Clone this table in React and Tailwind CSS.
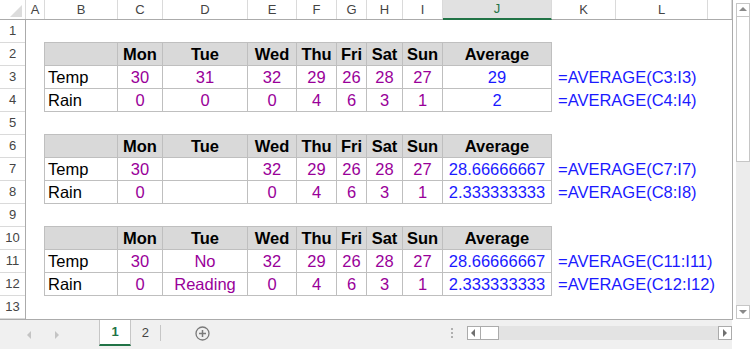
import React from "react";

const COLS = [
  { label: "A", w: "w-[19px]" },
  { label: "B", w: "w-[73px]" },
  { label: "C", w: "w-[45px]" },
  { label: "D", w: "w-[85px]" },
  { label: "E", w: "w-[49px]" },
  { label: "F", w: "w-[40px]" },
  { label: "G", w: "w-[30px]" },
  { label: "H", w: "w-[36px]" },
  { label: "I", w: "w-[40px]" },
  { label: "J", w: "w-[109px]", active: true },
  { label: "K", w: "w-[64px]" },
  { label: "L", w: "w-[92px]" },
  { label: "", w: "w-[24px]" },
];

const DAYS = ["Mon", "Tue", "Wed", "Thu", "Fri", "Sat", "Sun"];

const BLOCKS = [
  {
    row: "row-start-2",
    temp: ["30", "31", "32", "29", "26", "28", "27"],
    rain: ["0", "0", "0", "4", "6", "3", "1"],
    avg: ["29", "2"],
    formula: ["=AVERAGE(C3:I3)", "=AVERAGE(C4:I4)"],
  },
  {
    row: "row-start-6",
    temp: ["30", "", "32", "29", "26", "28", "27"],
    rain: ["0", "", "0", "4", "6", "3", "1"],
    avg: ["28.66666667", "2.333333333"],
    formula: ["=AVERAGE(C7:I7)", "=AVERAGE(C8:I8)"],
  },
  {
    row: "row-start-10",
    temp: ["30", "No", "32", "29", "26", "28", "27"],
    rain: ["0", "Reading", "0", "4", "6", "3", "1"],
    avg: ["28.66666667", "2.333333333"],
    formula: ["=AVERAGE(C11:I11)", "=AVERAGE(C12:I12)"],
  },
];

const cell = "border-r border-b border-[#bfbfbf] leading-[22px] whitespace-nowrap";

function Block({ b }) {
  const rows = [
    ["Temp", b.temp, b.avg[0], b.formula[0]],
    ["Rain", b.rain, b.avg[1], b.formula[1]],
  ];
  return (
    <div className={`${b.row} col-start-2 col-end-14 row-span-3 grid grid-cols-subgrid grid-rows-subgrid`}>
      {/* header row */}
      <div className={`${cell} -ml-px -mt-px border-l border-t bg-[#d9d9d9]`} />
      {DAYS.map((d) => (
        <div key={d} className={`${cell} -mt-px border-t bg-[#d9d9d9] text-center font-bold`}>
          {d}
        </div>
      ))}
      <div className={`${cell} -mt-px border-t bg-[#d9d9d9] text-center font-bold`}>Average</div>
      <div className="col-span-3" />

      {rows.map(([name, vals, avg, f]) => (
        <React.Fragment key={name}>
          <div className={`${cell} -ml-px border-l pl-[3px]`}>{name}</div>
          {vals.map((v, i) => (
            <div key={i} className={`${cell} text-center text-[#990099]`}>
              {v}
            </div>
          ))}
          <div className={`${cell} text-center text-[#1a1aff]`}>{avg}</div>
          <div className="col-span-3 pl-[6px] leading-[22px] whitespace-nowrap text-[#1a1aff]">{f}</div>
        </React.Fragment>
      ))}
    </div>
  );
}

function Arrow({ dir, cls }) {
  const pts = {
    up: "1,6 5,2 9,6",
    down: "1,3 5,7 9,3",
    left: "6,1 2,5 6,9",
    right: "3,1 7,5 3,9",
  }[dir];
  return (
    <svg width="10" height="10" viewBox="0 0 10 10" className={cls}>
      <polygon points={pts} fill="currentColor" />
    </svg>
  );
}

export default function App() {
  return (
    <div className="w-[754px] h-[349px] overflow-hidden bg-white font-['Liberation_Sans',Arial,sans-serif]">
      <div className="flex h-[320px]">
        {/* sheet */}
        <div className="w-[733px] border-r border-b border-[#ababab] flex flex-col">
          {/* column headers */}
          <div className="flex h-[20px] border-b border-[#ababab] text-[13px] text-[#444]">
            <div className="w-[26px] border-r border-[#dadada] relative">
              <svg width="12" height="12" viewBox="0 0 12 12" className="absolute right-[3px] bottom-[2px]">
                <polygon points="12,0 12,12 0,12" fill="#dcdcdc" />
              </svg>
            </div>
            {COLS.map((c, i) => (
              <div
                key={i}
                className={
                  c.active
                    ? `${c.w} shrink-0 border-r border-[#dadada] bg-[#e1e1e1] text-[#217346] border-b-2 border-b-[#217346] -mb-px text-center leading-[18px]`
                    : `${c.w} shrink-0 border-r border-[#dadada] text-center leading-[19px]`
                }
              >
                {c.label}
              </div>
            ))}
          </div>

          <div className="flex">
            {/* row headers */}
            <div className="w-[26px] shrink-0 flex flex-col border-r border-[#ababab] text-[13px] text-[#444]">
              {Array.from({ length: 13 }, (_, i) => (
                <div key={i} className="h-[23px] border-b border-[#dadada] text-center leading-[22px]">
                  {i + 1}
                </div>
              ))}
            </div>

            {/* cells */}
            <div className="grid grid-cols-[19px_73px_45px_85px_49px_40px_30px_36px_40px_109px_64px_92px_24px] grid-rows-[repeat(13,23px)] text-[16.5px] text-black">
              {BLOCKS.map((b, i) => (
                <Block key={i} b={b} />
              ))}
            </div>
          </div>
        </div>

        {/* vertical scrollbar */}
        <div className="flex-1 pl-[3px] pt-[3px] flex flex-col">
          <div className="w-[14px] h-[14px] border border-[#c6c6c6] flex items-center justify-center text-[#8a8a8a]">
            <Arrow dir="up" />
          </div>
          <div className="w-[14px] h-[145px] border border-[#c6c6c6] border-t-0 bg-white" />
          <div className="w-[14px] flex-1 bg-[#ececec]" />
          <div className="w-[14px] h-[14px] border border-[#c6c6c6] flex items-center justify-center text-[#8a8a8a] mb-[1px]">
            <Arrow dir="down" />
          </div>
        </div>
      </div>

      {/* sheet tabs bar */}
      <div className="flex h-[29px] bg-[#f0f0f0] text-[13px]">
        <div className="w-[100px] flex items-center gap-[17px] pl-[25px] text-[#c4c4c4]">
          <Arrow dir="left" />
          <Arrow dir="right" />
        </div>
        <div className="w-[32px] h-[26px] bg-white border-x border-[#c6c6c6] border-b-2 border-b-[#217346] flex items-center justify-center font-bold text-[#217346]">
          1
        </div>
        <div className="w-[29px] flex items-center justify-center text-[#444] pb-[3px]">2</div>
        <div className="w-px h-[16px] mt-[5px] bg-[#c6c6c6]" />
        <div className="w-[83px] flex items-center pl-[34px] pb-[3px]">
          <svg width="15" height="15" viewBox="0 0 15 15">
            <circle cx="7.5" cy="7.5" r="6.5" fill="none" stroke="#7a7a7a" strokeWidth="1.3" />
            <path d="M7.5 4v7M4 7.5h7" stroke="#7a7a7a" strokeWidth="1.5" />
          </svg>
        </div>
        <div className="flex-1 flex items-center pl-[208px] pb-[3px]">
          <div className="flex flex-col gap-[2px] mr-[14px]">
            <div className="w-[2px] h-[2px] bg-[#b0b0b0]" />
            <div className="w-[2px] h-[2px] bg-[#b0b0b0]" />
            <div className="w-[2px] h-[2px] bg-[#b0b0b0]" />
          </div>
          <div className="w-[14px] h-[14px] border border-[#ababab] bg-white flex items-center justify-center text-[#707070]">
            <Arrow dir="left" />
          </div>
          <div className="w-[18px] h-[14px] border border-l-0 border-[#ababab] bg-white" />
          <div className="w-[219px] h-[14px] bg-[#e3e3e3]" />
          <div className="w-[14px] h-[14px] border border-[#ababab] bg-white flex items-center justify-center text-[#707070]">
            <Arrow dir="right" />
          </div>
        </div>
        <div className="w-[22px] bg-white" />
      </div>
    </div>
  );
}
